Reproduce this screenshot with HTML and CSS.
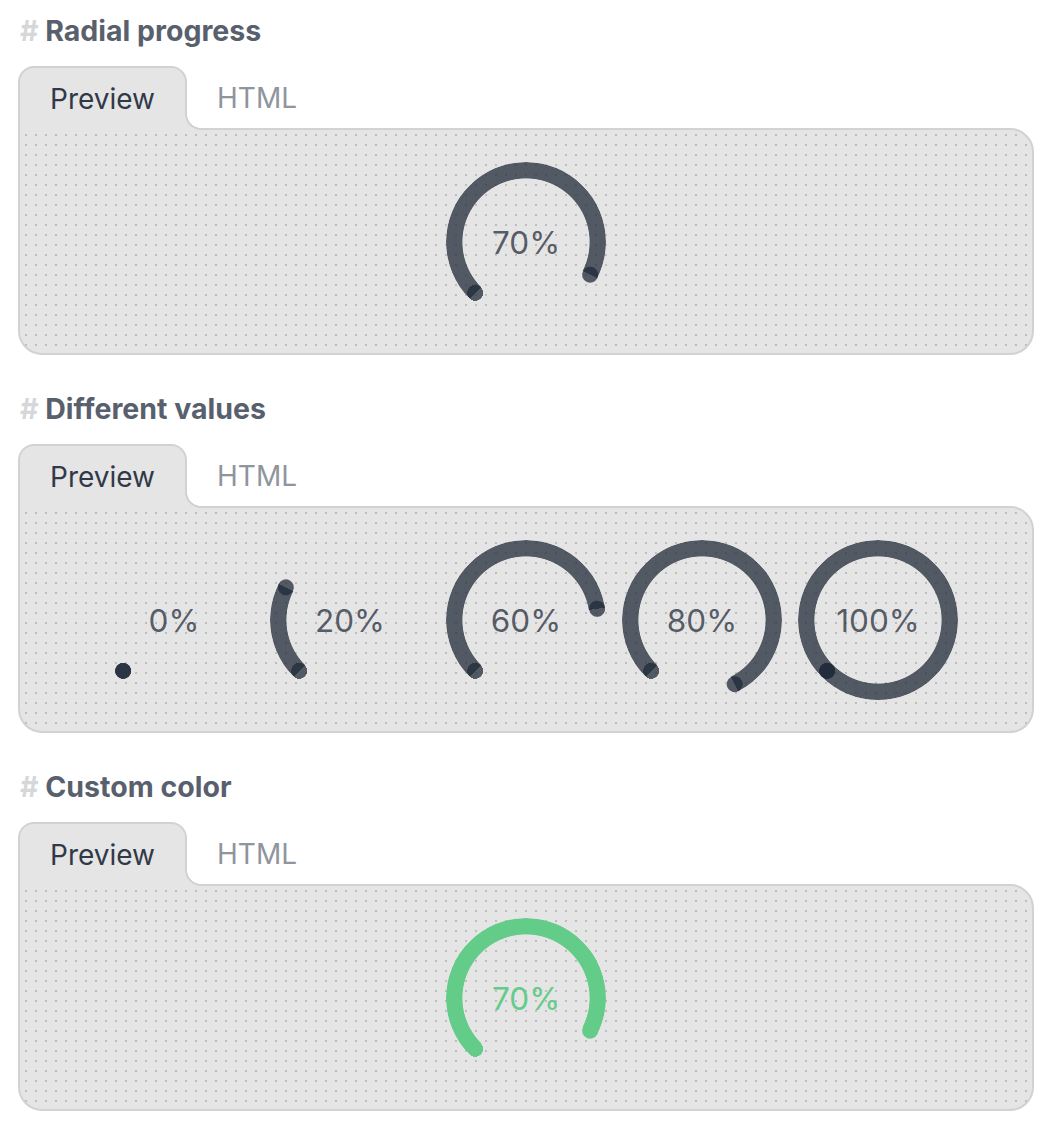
FILE: index.html
```html
<!DOCTYPE html>
<html lang="en">
<head>
<meta charset="utf-8">
<title>Radial progress</title>
<link rel="stylesheet" href="styles.css">
</head>
<body>
<main class="page">
  <section class="demo">
    <h2 class="demo-title"><span class="hash">#</span> Radial progress</h2>
    <div class="tabs">
      <span class="tab tab-active">Preview</span>
      <span class="tab">HTML</span>
    </div>
    <div class="preview">
      <div class="radial" style="--value:70">70%</div>
    </div>
  </section>

  <section class="demo">
    <h2 class="demo-title"><span class="hash">#</span> Different values</h2>
    <div class="tabs">
      <span class="tab tab-active">Preview</span>
      <span class="tab">HTML</span>
    </div>
    <div class="preview">
      <div class="radial" style="--value:0">0%</div>
      <div class="radial" style="--value:20">20%</div>
      <div class="radial" style="--value:60">60%</div>
      <div class="radial" style="--value:80">80%</div>
      <div class="radial" style="--value:100">100%</div>
    </div>
  </section>

  <section class="demo">
    <h2 class="demo-title"><span class="hash">#</span> Custom color</h2>
    <div class="tabs">
      <span class="tab tab-active">Preview</span>
      <span class="tab">HTML</span>
    </div>
    <div class="preview">
      <div class="radial radial-success" style="--value:70">70%</div>
    </div>
  </section>
</main>
</body>
</html>
```
FILE: styles.css
```css
* { box-sizing: border-box; }

body {
  margin: 0;
  background: #ffffff;
  font-family: Inter, "Noto Sans", "Liberation Sans", sans-serif;
}

.page {
  padding: 13px 16px 0 18px;
}

.demo {
  margin-bottom: 36px;
}

.demo-title {
  margin: 0 0 17px;
  font-size: 28.5px;
  line-height: 36px;
  font-weight: 700;
  color: #59606d;
}

.hash {
  color: #d5d7db;
  margin-left: 2px;
}

.tabs {
  display: flex;
  align-items: flex-end;
  position: relative;
  z-index: 2;
}

.tab {
  height: 64px;
  margin-bottom: -2px;
  padding: 0 31px 0 30px;
  display: flex;
  align-items: center;
  font-size: 28px;
  color: #8f949d;
}

.tab-active {
  position: relative;
  padding: 0 30px;
  background: #e5e5e5;
  border: 2px solid #d2d2d2;
  border-bottom: none;
  border-radius: 16px 16px 0 0;
  color: #313948;
}

.tab-active::after {
  content: "";
  position: absolute;
  left: 100%;
  bottom: 0;
  width: 16px;
  height: 16px;
  background: radial-gradient(circle at 100% 0, #ffffff 13.6px, #d2d2d2 14.2px, #d2d2d2 15.6px, #e5e5e5 16.2px);
}

.preview {
  display: flex;
  justify-content: center;
  align-items: center;
  gap: 16px;
  height: 227px;
  padding: 32px 0 31px;
  border: 2px solid #d2d2d2;
  border-radius: 0 24px 24px 24px;
  background-color: #e5e5e5;
  background-image: radial-gradient(circle, #bdbdbd 0.95px, rgba(189,189,189,0) 1.15px);
  background-size: 10px 10px;
  background-position: 1px 0;
}

.radial {
  --value: 0;
  --size: 160px;
  --thickness: 16px;
  position: relative;
  display: inline-grid;
  place-content: center;
  width: var(--size);
  height: var(--size);
  flex: none;
  border-radius: 9999px;
  font-size: 31.5px;
  color: rgba(31, 41, 55, 0.74);
}

.radial::before,
.radial::after {
  content: "";
  position: absolute;
  border-radius: 9999px;
}

.radial::before {
  inset: 0;
  transform: rotate(225deg);
  background:
    radial-gradient(farthest-side, currentColor 98%, #0000) top / var(--thickness) var(--thickness) no-repeat,
    conic-gradient(currentColor calc(var(--value) * 1%), #0000 0);
  -webkit-mask: radial-gradient(farthest-side, #0000 calc(99% - var(--thickness)), #000 calc(100% - var(--thickness)));
  mask: radial-gradient(farthest-side, #0000 calc(99% - var(--thickness)), #000 calc(100% - var(--thickness)));
}

.radial::after {
  inset: calc(50% - var(--thickness) / 2);
  background-color: currentColor;
  transform: rotate(calc(225deg + var(--value) * 3.6deg - 90deg)) translate(calc(var(--size) / 2 - 50%));
}

.radial-success {
  color: #64cc89;
}
```
